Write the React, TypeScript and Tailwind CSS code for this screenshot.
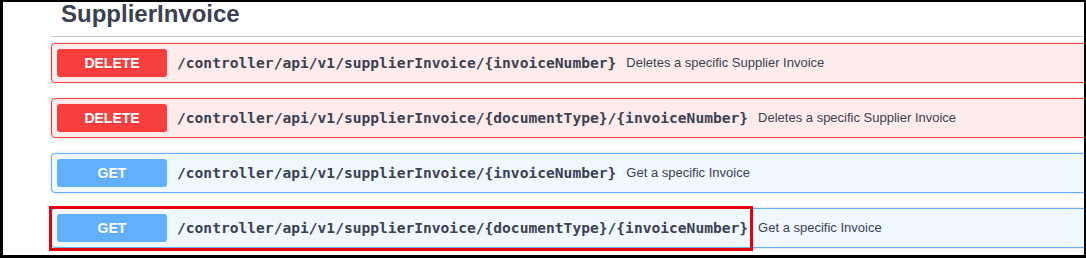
import React from "react";

type Op = {
  method: "DELETE" | "GET";
  path: string;
  summary: string;
  marked?: boolean;
};

const ops: Op[] = [
  {
    method: "DELETE",
    path: "/controller/api/v1/supplierInvoice/{invoiceNumber}",
    summary: "Deletes a specific Supplier Invoice",
  },
  {
    method: "DELETE",
    path: "/controller/api/v1/supplierInvoice/{documentType}/{invoiceNumber}",
    summary: "Deletes a specific Supplier Invoice",
  },
  {
    method: "GET",
    path: "/controller/api/v1/supplierInvoice/{invoiceNumber}",
    summary: "Get a specific Invoice",
  },
  {
    method: "GET",
    path: "/controller/api/v1/supplierInvoice/{documentType}/{invoiceNumber}",
    summary: "Get a specific Invoice",
    marked: true,
  },
];

const OpRow = ({ op }: { op: Op }) => {
  const isDelete = op.method === "DELETE";
  return (
    <div
      className={
        isDelete
          ? "relative flex h-[40px] items-center rounded-[4px] border border-[#f93e3e] bg-[#feebeb] px-[5px] shadow-[0_0_3px_rgba(0,0,0,0.19)]"
          : "relative flex h-[40px] items-center rounded-[4px] border border-[#61affe] bg-[#eff7ff] px-[5px] shadow-[0_0_3px_rgba(0,0,0,0.19)]"
      }
    >
      <span
        className={
          isDelete
            ? "flex h-[28px] w-[110px] shrink-0 items-center justify-center rounded-[3px] bg-[#f93e3e] text-[14px] font-bold text-white [text-shadow:0_1px_0_rgba(0,0,0,0.1)]"
            : "flex h-[28px] w-[110px] shrink-0 items-center justify-center rounded-[3px] bg-[#61affe] text-[14px] font-bold text-white [text-shadow:0_1px_0_rgba(0,0,0,0.1)]"
        }
        style={{ fontFamily: '"Liberation Sans", Arial, sans-serif' }}
      >
        {op.method}
      </span>
      <span
        className="ml-[10px] whitespace-nowrap text-[14.6px] font-bold text-[#3b4151]"
        style={{ fontFamily: '"DejaVu Sans Mono", monospace' }}
      >
        {op.path}
      </span>
      <span
        className="ml-[10px] whitespace-nowrap text-[13px] text-[#3b4151]"
        style={{ fontFamily: '"Liberation Sans", Arial, sans-serif' }}
      >
        {op.summary}
      </span>
      {op.marked && (
        <span className="pointer-events-none absolute -left-[3px] -top-[3px] h-[45px] w-[704px] border-[3px] border-[#e8000b]" />
      )}
    </div>
  );
};

export default function App() {
  return (
    <div className="h-[258px] w-[1086px] overflow-hidden border-b-[3px] border-l-[3px] border-r-2 border-t-2 border-black bg-white">
      <div className="w-[1200px] pl-[48px]">
        <h4
          className="h-[35px] border-b border-[#c4c6cb] pl-[10px] text-[24px] font-bold leading-[24px] text-[#3b4151]"
          style={{ fontFamily: '"Liberation Sans", Arial, sans-serif' }}
        >
          SupplierInvoice
        </h4>
        <div className="mt-[6px] flex flex-col gap-[15px]">
          {ops.map((op, i) => (
            <OpRow key={`op-${i}`} op={op} />
          ))}
        </div>
      </div>
    </div>
  );
}
